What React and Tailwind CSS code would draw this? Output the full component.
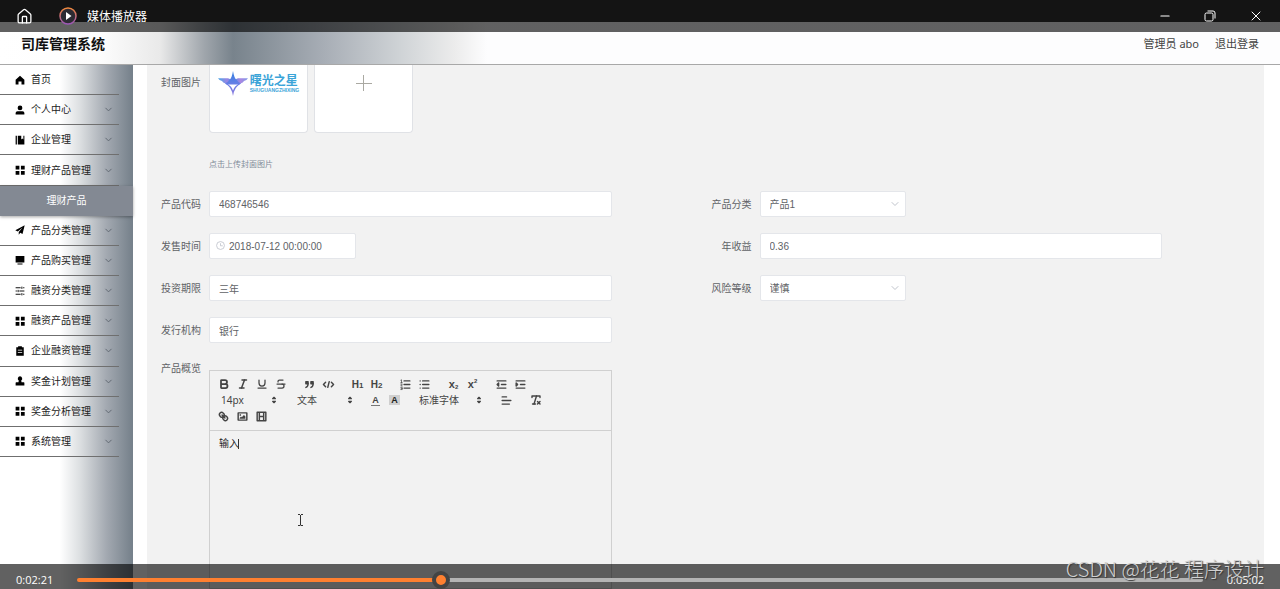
import React from "react";
import { Bold, Italic, Underline, Strikethrough, RemoveFormatting, ChevronDown, House, Minus, X } from "lucide-react";

const menuIcons = {
  home: <path d="M8 1 1 7.5V15h4.6v-4.5h4.8V15H15V7.5z" />,
  user: (
    <>
      <circle cx="8" cy="4.6" r="3.8" />
      <path d="M1 15v-2.200q0-3 3-3h8q3 0 3 3V15z" />
    </>
  ),
  book: <path d="M1 1h2v14H1zM4.500 1H10v6l1.700-1.500L13.400 7V1H15v14H4.500z" />,
  grid: <path d="M1 1h6v6H1zM9.500 1h6v6h-6zM1 9.500h6v6H1zM9.500 9.500h6v6h-6z" />,
  plane: <path d="M15.500.5.5 8.500l4 1.800L12 4 6 11.200V15.500l2.400-3 3.600 1.800z" />,
  screen: <path d="M1 1.500h14v10.500H1zM4 13.500h8V15H4z" />,
  sliders: (
    <path d="M1 2.800h8M13 2.800h2M11 1v3.600M1 8h2M7 8h8M5 6.200v3.600M1 13.200h8M13 13.200h2M11 11.400v3.600" fill="none" stroke="currentColor" strokeWidth="1.500" />
  ),
  clipboard: (
    <path fillRule="evenodd" d="M5 .5h6V2h3v13.500H2V2h3zM4.500 6v1.200h7V6zM4.500 10v1.200h7V10z" />
  ),
  stamp: <path d="M8 .5a3.700 3.700 0 0 1 2 6.700l.4 2.800H14q1 0 1 1v1H1v-1q0-1 1-1h3.600L6 7.200A3.700 3.700 0 0 1 8 .5zM1 12h14v3H1z" />,
};

const menu = [
  { label: "首页", icon: "home" },
  { label: "个人中心", icon: "user", more: true },
  { label: "企业管理", icon: "book", more: true },
  { label: "理财产品管理", icon: "grid", more: true },
  { label: "理财产品", sub: true },
  { label: "产品分类管理", icon: "plane", more: true },
  { label: "产品购买管理", icon: "screen", more: true },
  { label: "融资分类管理", icon: "sliders", more: true },
  { label: "融资产品管理", icon: "grid", more: true },
  { label: "企业融资管理", icon: "clipboard", more: true },
  { label: "奖金计划管理", icon: "stamp", more: true },
  { label: "奖金分析管理", icon: "grid", more: true },
  { label: "系统管理", icon: "grid", more: true },
];

function Sidebar() {
  return (
    <nav className="w-[133px] shrink-0 bg-[linear-gradient(to_right,#fff_60px,#dcdfe1_80px,#a2a8b0_107px,#76818b_132px)]">
      <ul className="grid h-[392px] auto-rows-fr">
        {menu.map((m) =>
          m.sub ? (
            <li key={m.label} className="z-10 flex bg-[#838993] shadow-[0_1px_3px_rgba(0,0,0,0.35)]">
              <a href="#product" className="flex flex-1 items-center justify-center text-[10px] text-white">{m.label}</a>
            </li>
          ) : (
            <li key={m.label} className="mr-[14px] flex border-b border-[#6f6f6f]">
              <a href="#menu" className="flex flex-1 items-center pr-[5px] pl-[15px] text-[10px] text-[#222]">
                <svg viewBox="0 0 16 16" className="mr-[6px] size-[10px] text-black" fill="currentColor">{menuIcons[m.icon]}</svg>
                <span className="flex-1 whitespace-nowrap">{m.label}</span>
                {m.more && <ChevronDown className="size-[11px] text-[#5d656e]" strokeWidth={2} />}
              </a>
            </li>
          )
        )}
      </ul>
    </nav>
  );
}

const box = "h-[26px] rounded-[2px] border border-[#e4e6ea] bg-white text-[10px] text-[#606266] outline-none";

function Field({ id, label, children }) {
  return (
    <div className="flex h-[26px] items-center">
      <label htmlFor={id} className="w-[54px] shrink-0 pr-2 text-right text-[10px] whitespace-nowrap text-[#606266]">{label}</label>
      {children}
    </div>
  );
}

function TextField({ id, label, value }) {
  return (
    <Field id={id} label={label}>
      <input id={id} defaultValue={value} className={box + " mr-[94px] min-w-0 flex-1 px-[9px]"} />
    </Field>
  );
}

function SelectField({ id, label, value }) {
  return (
    <Field id={id} label={label}>
      <div className="relative flex">
        <select id={id} className={box + " w-[146px] appearance-none px-[9px]"}>
          <option>{value}</option>
        </select>
        <ChevronDown className="pointer-events-none absolute top-[7px] right-[5px] size-3 text-[#c0c4cc]" strokeWidth={2} />
      </div>
    </Field>
  );
}

function Draw({ children }) {
  return (
    <svg viewBox="0 0 18 18" className="size-[13px]" fill="none" stroke="#444" strokeWidth="2" strokeLinecap="round" strokeLinejoin="round">
      {children}
    </svg>
  );
}

function Tool({ name, children }) {
  return (
    <button type="button" aria-label={name} className="flex h-4 w-[19px] items-center justify-center text-[#444]">
      {children}
    </button>
  );
}

function Picker({ name, value, width }) {
  return (
    <div className={"relative flex h-4 " + width}>
      <select aria-label={name} className="h-4 w-full appearance-none bg-transparent font-['Noto_Sans','Noto_Sans_CJK_SC',sans-serif] text-[10px] leading-4 text-[#444] outline-none">
        <option>{value}</option>
      </select>
      <svg viewBox="0 0 18 18" className="pointer-events-none absolute top-[2px] right-0 size-3" fill="#444" stroke="#444" strokeWidth="2" strokeLinejoin="round">
        <path d="M7 11l2 2 2-2zM7 7l2-2 2 2z" />
      </svg>
    </div>
  );
}

function Editor() {
  const glyph = "size-3";
  return (
    <div className="mt-[11px] mr-[94px] flex min-w-0 flex-1 flex-col border border-[#d0d0d0]">
      <div className="border-b border-[#d0d0d0] px-1 pt-[5px] pb-[6px]">
        <div className="flex gap-[10px]">
          <div className="flex">
            <Tool name="粗体"><Bold className={glyph} strokeWidth={3.5} /></Tool>
            <Tool name="斜体"><Italic className={glyph} strokeWidth={3} /></Tool>
            <Tool name="下划线"><Underline className={glyph} strokeWidth={2.5} /></Tool>
            <Tool name="删除线"><Strikethrough className={glyph} strokeWidth={2.5} /></Tool>
          </div>
          <div className="flex">
            <Tool name="引用">
              <Draw>
                <path fill="#444" d="M4 5h3v3H4zM11 5h3v3h-3z" />
                <path d="M7 8c0 4-3 5-3 5M14 8c0 4-3 5-3 5" />
              </Draw>
            </Tool>
            <Tool name="代码"><Draw><path d="M5 6 2 9l3 3M13 6l3 3-3 3M10 5 8 13" /></Draw></Tool>
          </div>
          <div className="flex">
            <Tool name="标题一"><span className="text-[10px] font-bold">H<span className="text-[8px]">1</span></span></Tool>
            <Tool name="标题二"><span className="text-[10px] font-bold">H<span className="text-[8px]">2</span></span></Tool>
          </div>
          <div className="flex">
            <Tool name="有序列表">
              <Draw>
                <path d="M7 4h8M7 9h8M7 14h8" />
                <path strokeWidth="1" d="M2.500 3l1-.5v4M2.500 6.500h2M2.500 8.500h2l-2 2.500h2M2.500 13h2v3h-2M3 14.500h1.500" />
              </Draw>
            </Tool>
            <Tool name="无序列表"><Draw><path d="M6.500 4H15M6.500 9H15M6.500 14H15M3 4h.01M3 9h.01M3 14h.01" /></Draw></Tool>
          </div>
          <div className="flex">
            <Tool name="下标"><span className="flex items-end text-[11px] leading-3 font-bold">x<span className="text-[6px] leading-[6px]">2</span></span></Tool>
            <Tool name="上标"><span className="flex items-start text-[11px] leading-3 font-bold">x<span className="text-[6px] leading-[6px]">2</span></span></Tool>
          </div>
          <div className="flex">
            <Tool name="减少缩进"><Draw><path d="M3 14h12M3 4h12M9 9h6" /><path fill="#444" d="M5 7v4L3 9z" /></Draw></Tool>
            <Tool name="增加缩进"><Draw><path d="M3 14h12M3 4h12M9 9h6" /><path fill="#444" d="M3 7v4l2-2z" /></Draw></Tool>
          </div>
        </div>
        <div className="flex pl-[7px]">
          <Picker name="字号" value="14px" width="w-[59px]" />
          <div className="w-[17px]" />
          <Picker name="标题" value="文本" width="w-[59px]" />
          <div className="flex pl-[10px]">
            <Tool name="文字颜色"><span className="border-b border-[#777] px-[1px] text-[9px] leading-[10px] font-bold">A</span></Tool>
            <Tool name="背景颜色"><span className="bg-[#cfcfcf] px-[2px] text-[9px] leading-[10px] font-bold text-[#222]">A</span></Tool>
          </div>
          <div className="flex pl-[15px]">
            <Picker name="字体" value="标准字体" width="w-[66px]" />
          </div>
          <div className="flex gap-[10px] pl-3">
            <Tool name="对齐"><Draw><path d="M3 9h12M3 14h10M3 4h6" /></Draw></Tool>
            <Tool name="清除格式"><RemoveFormatting className={glyph} strokeWidth={2.8} /></Tool>
          </div>
        </div>
        <div className="flex">
          <Tool name="链接">
            <Draw>
              <path d="M7 7l4 4" />
              <path d="M8.900 4.577a3.476 3.476 0 0 1 .36 4.679A3.476 3.476 0 0 1 4.577 8.900C3.185 7.500 2.035 6.400 4.217 4.217S7.500 3.185 8.900 4.577Z" />
              <path d="M13.423 9.100a3.476 3.476 0 0 0-4.679-.36 3.476 3.476 0 0 0 .36 4.679c1.392 1.392 2.500 2.542 4.679.36S14.815 10.500 13.423 9.100Z" />
            </Draw>
          </Tool>
          <Tool name="图片">
            <Draw>
              <path d="M3 4h12v10H3z" />
              <path stroke="none" fill="#444" d="M5 12v-1l2-2 1 1 3-3 2 2v3zM5 6h2v2H5z" />
            </Draw>
          </Tool>
          <Tool name="视频"><Draw><path d="M3 3h12v12H3zM6 3v12M12 3v12M6 9h6" /></Draw></Tool>
        </div>
      </div>
      <div className="relative flex flex-1">
        <textarea id="overview" defaultValue="输入" className="flex-1 resize-none bg-transparent px-[9px] py-[6px] text-[10px] leading-[14px] text-[#222] outline-none" />
        <span className="absolute top-2 left-[28px] h-[10px] w-px bg-[#333]" />
        <svg viewBox="0 0 7 13" className="absolute top-[83px] left-[87px] h-[13px] w-[7px]" fill="none" stroke="#333">
          <path d="M1 .5h2M4 .5h2M3.500 1v10.500M1 11.500h2M4 11.500h2" />
        </svg>
      </div>
    </div>
  );
}

function CoverUpload() {
  const card = "flex h-[68px] w-[99px] justify-center rounded-b-[4px] border border-t-0 border-[#e0e2e6] bg-white";
  return (
    <div className="flex">
      <span className="w-[54px] shrink-0 pt-[11px] pr-2 text-right text-[10px] leading-[14px] whitespace-nowrap text-[#606266]">封面图片</span>
      <div>
        <div className="flex gap-[6px]">
          <div className={card + " gap-[2px] pt-[6px]"}>
            <svg viewBox="0 0 30 25" className="h-[25px] w-[30px]">
              <defs>
                <linearGradient id="star" x1="0" x2="0" y1="0" y2="1">
                  <stop offset="0" stopColor="#2f7fe0" />
                  <stop offset=".55" stopColor="#6a7fe6" />
                  <stop offset="1" stopColor="#8d78dc" />
                </linearGradient>
                <linearGradient id="wing" x1="0" x2="1" y1="0" y2="0">
                  <stop offset="0" stopColor="#4aa6e6" />
                  <stop offset=".3" stopColor="#9a86e4" />
                  <stop offset=".5" stopColor="#4f8fe6" />
                  <stop offset=".75" stopColor="#a987e2" />
                  <stop offset="1" stopColor="#7f9be8" />
                </linearGradient>
              </defs>
              <path fill="url(#wing)" d="M0 7.200h10l5 2 5-2h10q-1.200 2.300-4 2.800-.8 2-3.500 2.400-1.500 2-4.500 2h-6q-3 0-4.500-2Q4.800 12 4 10 1.200 9.500 0 7.200z" />
              <path fill="url(#star)" d="M15 0q1 6.500 3.500 9Q20 11 23 12.500q-6.500 3-8 12.500-1.500-9.500-8-12.500 3-1.500 4.500-3.500Q14 6.500 15 0z" />
              <path fill="#fff" d="M10 13.500h10Q16.500 15 15 19.500 13.500 15 10 13.500z" />
            </svg>
            <div className="pt-[4px] text-[#3ba4d8]">
              <div className="text-[12px] leading-[13px] font-bold">曙光之星</div>
              <div className="text-[5px] leading-[5px] font-bold">SHUGUANGZHIXING</div>
            </div>
          </div>
          <button type="button" aria-label="上传图片" className={card + " pt-[10px]"}>
            <svg viewBox="0 0 16 16" className="size-4" stroke="#aaa9a2" fill="none"><path d="M7.500 0v16M0 8.500h16" /></svg>
          </button>
        </div>
        <p className="pt-[25px] text-[8px] leading-[14px] text-[#7f8b99]">点击上传封面图片</p>
      </div>
    </div>
  );
}

export default function App() {
  return (
    <div className="relative flex h-screen flex-col overflow-hidden bg-white font-['Liberation_Sans','Noto_Sans_CJK_SC',sans-serif]">
      <div className="z-20 -mb-[10px] flex h-8 shrink-0 items-center bg-[linear-gradient(#141414_22px,rgba(0,0,0,0.62)_22px)] px-4 text-white">
        <button type="button" aria-label="主页"><House className="size-[17px]" strokeWidth={1.8} /></button>
        <svg viewBox="0 0 18 18" className="ml-[26px] size-[18px]">
          <defs>
            <linearGradient id="ring" x1="0" x2="0" y1="0" y2="1">
              <stop offset="0" stopColor="#f28a3c" />
              <stop offset="1" stopColor="#9a55b8" />
            </linearGradient>
          </defs>
          <circle cx="9" cy="9" r="8" fill="#2c2b33" stroke="url(#ring)" strokeWidth="1.500" />
          <path d="M7 5v8l5.500-4z" fill="#fff" />
        </svg>
        <span className="ml-[10px] flex-1 pt-px text-[12px]">媒体播放器</span>
        <div className="flex items-center gap-8">
          <button type="button" aria-label="最小化"><Minus className="size-[14px]" strokeWidth={2} /></button>
          <button type="button" aria-label="还原">
            <svg viewBox="0 0 12 12" className="size-3" fill="none" stroke="#fff"><rect x="1" y="3" width="8" height="8" rx="1.500" /><path d="M3.500 1H9q2 0 2 2v5.500" /></svg>
          </button>
          <button type="button" aria-label="关闭"><X className="size-4" strokeWidth={1.500} /></button>
        </div>
      </div>

      <header className="flex h-[43px] shrink-0 items-center border-b border-[#a8a8a8] bg-[linear-gradient(to_right,#fff_0px,#fdfdfd_100px,#e9e9e9_160px,#a0a6ac_204px,#78838c_233px,#a8aeb6_325px,#cfd3d6_400px,#ececec_455px,#fdfdfe_487px)] pt-[3px] pr-[21px] pl-[21px]">
        <h1 className="flex-1 text-[14px] font-bold text-[#111]">司库管理系统</h1>
        <div className="flex gap-4 text-[11px] text-[#444]">
          <span className="font-['Noto_Sans','Noto_Sans_CJK_SC',sans-serif]">管理员 abo</span>
          <a href="#logout">退出登录</a>
        </div>
      </header>

      <div className="flex min-h-0 flex-1">
        <Sidebar />
        <main className="mr-4 ml-[14px] flex min-w-0 flex-1 flex-col bg-[#f2f2f2] px-2">
          <CoverUpload />
          <div className="mt-[19px] grid grid-cols-2 gap-y-4">
            <TextField id="code" label="产品代码" value="468746546" />
            <SelectField id="category" label="产品分类" value="产品1" />
            <Field id="date" label="发售时间">
              <div className="relative flex">
                <input id="date" defaultValue="2018-07-12 00:00:00" className={box + " w-[147px] pr-2 pl-[19px]"} />
                <svg viewBox="0 0 16 16" className="absolute top-2 left-[7px] size-[9px]" fill="none" stroke="#c0c4cc" strokeWidth="1.500">
                  <circle cx="8" cy="8" r="7" /><path d="M8 4v4.500h4" />
                </svg>
              </div>
            </Field>
            <TextField id="rate" label="年收益" value="0.36" />
            <TextField id="term" label="投资期限" value="三年" />
            <SelectField id="risk" label="风险等级" value="谨慎" />
            <TextField id="issuer" label="发行机构" value="银行" />
          </div>
          <div className="mt-4 grid min-h-0 flex-1 grid-cols-2">
            <div className="flex">
              <label htmlFor="overview" className="w-[54px] shrink-0 pr-2 text-right text-[10px] leading-5 whitespace-nowrap text-[#606266]">产品概览</label>
              <Editor />
            </div>
          </div>
        </main>
      </div>

      <footer className="absolute inset-x-0 bottom-0 z-20 flex h-[25px] items-center gap-6 bg-black/62 px-4 pt-[7px] font-['Open_Sans',sans-serif] text-[11px] text-white">
        <span>0:02:21</span>
        <input
          type="range"
          aria-label="播放进度"
          defaultValue="32"
          className="h-1 min-w-0 flex-1 appearance-none rounded-full bg-[linear-gradient(to_right,#ff8030_32%,#b4b4b4_32%)] outline-none [&::-webkit-slider-thumb]:size-[18px] [&::-webkit-slider-thumb]:appearance-none [&::-webkit-slider-thumb]:rounded-full [&::-webkit-slider-thumb]:border-4 [&::-webkit-slider-thumb]:border-[#444] [&::-webkit-slider-thumb]:bg-[#ff8030]"
        />
        <span>0:05:02</span>
      </footer>
      <div className="pointer-events-none absolute right-4 bottom-[6px] z-30 font-['Noto_Sans_CJK_SC',sans-serif] text-[20px] leading-7 font-light text-[#d0d0d0] [text-shadow:1px_1px_1px_#333]">CSDN @花花 程序设计</div>
    </div>
  );
}
